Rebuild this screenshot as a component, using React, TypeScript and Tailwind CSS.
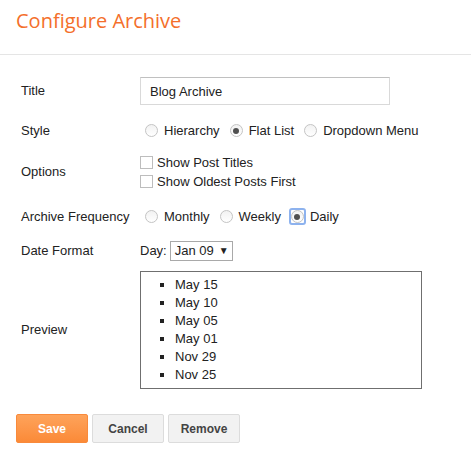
import type { ReactNode } from 'react'

function Radio({ checked, focused, label }: { checked?: boolean; focused?: boolean; label: string }) {
  return (
    <label className="flex items-center mr-[10px]">
      <span
        className={`flex items-center justify-center w-[17px] h-[17px] -mx-[2px] rounded-[3px] ${
          focused ? 'border-2 border-[#8db2ee]' : 'border-2 border-transparent'
        }`}
      >
        <span className="flex items-center justify-center w-[13px] h-[13px] shrink-0 rounded-full border border-[#c4c4c4] bg-gradient-to-b from-[#f2f2f2] to-white">
          {checked && <span className="w-[6px] h-[6px] rounded-full bg-[#505050]" />}
        </span>
      </span>
      <span className="ml-[6px]">{label}</span>
    </label>
  )
}

function Checkbox({ label }: { label: string }) {
  return (
    <label className="flex items-center h-[19px]">
      <span className="w-[13px] h-[13px] border border-[#bdbdbd] bg-white mr-[4px]" />
      <span>{label}</span>
    </label>
  )
}

function Row({ label, className, children }: { label: string; className?: string; children: ReactNode }) {
  return (
    <div className={`flex items-center ${className ?? ''}`}>
      <div className="w-[119px] shrink-0">{label}</div>
      <div className="flex-1">{children}</div>
    </div>
  )
}

const archiveDates = ['May 15', 'May 10', 'May 05', 'May 01', 'Nov 29', 'Nov 25']

export default function App() {
  return (
    <div className="w-[471px] h-[472px] bg-white text-[13px] leading-[16px] text-[#222] font-['Liberation_Sans',Arial,sans-serif]">
      <div className="h-[55px] border-b border-[#e5e5e5] px-4 pt-[7px]">
        <h1 className="font-['Open_Sans',sans-serif] text-[20px] leading-[28px] text-[#f46f2b]">Configure Archive</h1>
      </div>

      <div className="pl-[21px]">
        <Row label="Title" className="mt-[22px]">
          <input
            readOnly
            value="Blog Archive"
            className="w-[250px] h-[28px] border border-[#d9d9d9] border-t-[#c0c0c0] px-[9px] text-[13px] text-[#222] outline-none"
          />
        </Row>

        <Row label="Style" className="mt-[16px] h-[19px]">
          <div className="flex items-center pl-[5px]">
            <Radio label="Hierarchy" />
            <Radio checked label="Flat List" />
            <Radio label="Dropdown Menu" />
          </div>
        </Row>

        <Row label="Options" className="mt-[13px]">
          <div className="flex flex-col">
            <Checkbox label="Show Post Titles" />
            <Checkbox label="Show Oldest Posts First" />
          </div>
        </Row>

        <Row label="Archive Frequency" className="mt-[16px] h-[19px]">
          <div className="flex items-center pl-[5px]">
            <Radio label="Monthly" />
            <Radio label="Weekly" />
            <Radio checked focused label="Daily" />
          </div>
        </Row>

        <Row label="Date Format" className="mt-[15px]">
          <div className="flex items-center">
            <span className="mr-[3px]">Day:</span>
            <span className="flex items-center h-[20px] w-[63px] border border-[#a9a9a9] pl-[4px] bg-white">
              <span>Jan 09</span>
              <span className="ml-[5px] text-[10px]">▼</span>
            </span>
          </div>
        </Row>

        <Row label="Preview" className="mt-[10px]">
          <div className="w-[282px] h-[118px] border border-[#6f6f6f] pt-[4px]">
            <ul className="pl-[34px]">
              {archiveDates.map((d) => (
                <li key={d} className="relative h-[18px] leading-[18px]">
                  <span className="absolute -left-[15px] top-[7px] w-[4px] h-[4px] bg-[#222]" />
                  {d}
                </li>
              ))}
            </ul>
          </div>
        </Row>
      </div>

      <div className="flex gap-[4px] px-4 mt-[25px]">
        <button className="w-[72px] h-[29px] rounded-[2px] border border-[#f98a3b] bg-gradient-to-b from-[#fea35a] to-[#fb8a37] text-white text-[12px] font-bold">
          Save
        </button>
        <button className="w-[72px] h-[29px] rounded-[2px] border border-[#dcdcdc] bg-[#f2f2f2] text-[#444] text-[12px] font-bold">
          Cancel
        </button>
        <button className="w-[72px] h-[29px] rounded-[2px] border border-[#dcdcdc] bg-[#f2f2f2] text-[#444] text-[12px] font-bold">
          Remove
        </button>
      </div>
    </div>
  )
}
